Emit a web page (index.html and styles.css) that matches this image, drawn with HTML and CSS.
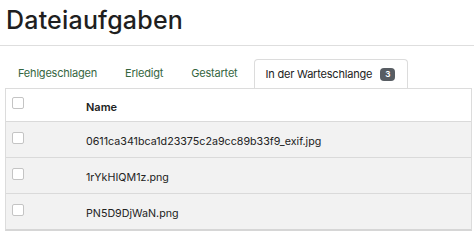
FILE: index.html
```html
<!DOCTYPE html>
<html>
<head>
<meta charset="utf-8">
<link rel="stylesheet" href="styles.css">
</head>
<body>
<div class="page">
  <h1 class="title">Dateiaufgaben</h1>
  <div class="content">
    <ul class="tabs">
      <li class="tab">Fehlgeschlagen</li>
      <li class="tab">Erledigt</li>
      <li class="tab">Gestartet</li>
      <li class="tab active">In der Warteschlange <span class="badge">3</span></li>
    </ul>
    <div class="table">
      <div class="row head">
        <div class="cell check"><span class="box"></span></div>
        <div class="cell name">Name</div>
      </div>
      <div class="row">
        <div class="cell check"><span class="box"></span></div>
        <div class="cell name">0611ca341bca1d23375c2a9cc89b33f9_exif.jpg</div>
      </div>
      <div class="row">
        <div class="cell check"><span class="box"></span></div>
        <div class="cell name">1rYkHIQM1z.png</div>
      </div>
      <div class="row">
        <div class="cell check"><span class="box"></span></div>
        <div class="cell name">PN5D9DjWaN.png</div>
      </div>
    </div>
  </div>
</div>
</body>
</html>
```
FILE: styles.css
```css
html, body {
  margin: 0;
  padding: 0;
  background: #fff;
}
.page {
  font-family: Inter, "Liberation Sans", Arial, sans-serif;
  color: #222;
}
.title {
  margin: 0;
  padding: 4px 0 0 6px;
  height: 41px;
  box-sizing: content-box;
  font-size: 25px;
  font-weight: 500;
  letter-spacing: 0.2px;
  line-height: 32px;
  color: #1f1f1f;
  border-bottom: 1px solid #dedede;
}
.content {
  padding: 13px 2px 0 5px;
}
.tabs {
  list-style: none;
  margin: 0 0 0 -1px;
  padding: 0;
  display: flex;
  align-items: flex-end;
  height: 29px;
}
.tab {
  font-size: 11px;
  letter-spacing: -0.2px;
  color: #35663f;
  padding: 0 14px;
  height: 29px;
  line-height: 29px;
  box-sizing: border-box;
}
.tab.active {
  color: #222;
  border: 1px solid #dcdcdc;
  border-bottom: none;
  border-radius: 4px 4px 0 0;
  background: #fff;
  display: flex;
  align-items: center;
  gap: 8px;
  padding: 0 12px 0 11px;
  margin-left: 2px;
}
.badge {
  display: inline-block;
  background: #585d63;
  color: #fff;
  font-size: 8px;
  font-weight: bold;
  letter-spacing: 0;
  line-height: 13px;
  height: 13px;
  padding: 0 5px;
  border-radius: 4px;
}
.table {
  border: 1px solid #dcdcdc;
  border-bottom: 2px solid #d6d6d6;
}
.row {
  display: flex;
  align-items: center;
  height: 35px;
  background: #f2f2f2;
  border-top: 1px solid #dadada;
  font-size: 10.7px;
  color: #222;
}
.row.head {
  background: #fff;
  border-top: none;
  height: 32px;
  font-size: 11px;
  font-weight: 600;
}
.cell.check {
  width: 74px;
  padding-left: 6px;
  padding-bottom: 4px;
  display: flex;
  align-items: center;
}
.box {
  display: inline-block;
  width: 10px;
  height: 10px;
  border: 1px solid #c4c4c4;
  border-radius: 2px;
  background: #fff;
}
.cell.name {
  flex: 1;
  padding-top: 4px;
}
```
